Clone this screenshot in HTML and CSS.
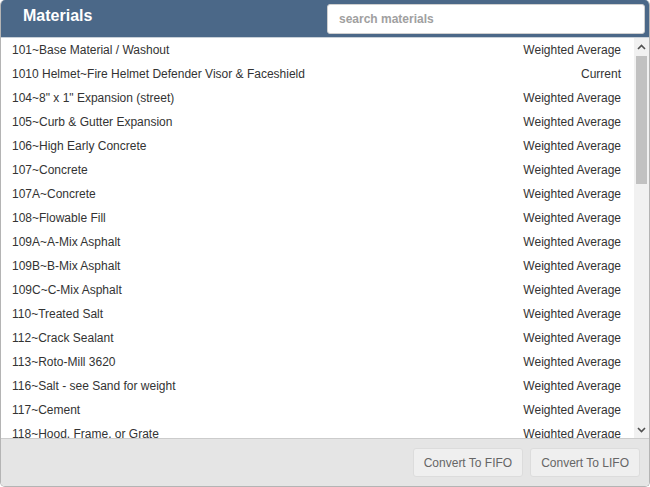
FILE: index.html
```html
<!DOCTYPE html>
<html>
<head>
<meta charset="utf-8">
<link rel="stylesheet" href="styles.css">
</head>
<body>
<div class="dialog">
  <div class="header">
    <div class="title">Materials</div>
    <input class="search" type="text" placeholder="search materials">
  </div>
  <div class="body">
    <div class="list">
      <div class="row"><span>101~Base Material / Washout</span><span>Weighted Average</span></div>
      <div class="row"><span>1010 Helmet~Fire Helmet Defender Visor &amp; Faceshield</span><span>Current</span></div>
      <div class="row"><span>104~8" x 1" Expansion (street)</span><span>Weighted Average</span></div>
      <div class="row"><span>105~Curb &amp; Gutter Expansion</span><span>Weighted Average</span></div>
      <div class="row"><span>106~High Early Concrete</span><span>Weighted Average</span></div>
      <div class="row"><span>107~Concrete</span><span>Weighted Average</span></div>
      <div class="row"><span>107A~Concrete</span><span>Weighted Average</span></div>
      <div class="row"><span>108~Flowable Fill</span><span>Weighted Average</span></div>
      <div class="row"><span>109A~A-Mix Asphalt</span><span>Weighted Average</span></div>
      <div class="row"><span>109B~B-Mix Asphalt</span><span>Weighted Average</span></div>
      <div class="row"><span>109C~C-Mix Asphalt</span><span>Weighted Average</span></div>
      <div class="row"><span>110~Treated Salt</span><span>Weighted Average</span></div>
      <div class="row"><span>112~Crack Sealant</span><span>Weighted Average</span></div>
      <div class="row"><span>113~Roto-Mill 3620</span><span>Weighted Average</span></div>
      <div class="row"><span>116~Salt - see Sand for weight</span><span>Weighted Average</span></div>
      <div class="row"><span>117~Cement</span><span>Weighted Average</span></div>
      <div class="row"><span>118~Hood, Frame, or Grate</span><span>Weighted Average</span></div>
    </div>
    <div class="scrollbar">
      <div class="arrow">
        <svg width="9" height="6" viewBox="0 0 9 6"><path d="M1 5 L4.5 1.5 L8 5" fill="none" stroke="#505050" stroke-width="1.6"/></svg>
      </div>
      <div class="track"><div class="thumb"></div></div>
      <div class="arrow">
        <svg width="9" height="6" viewBox="0 0 9 6"><path d="M1 1 L4.5 4.5 L8 1" fill="none" stroke="#505050" stroke-width="1.6"/></svg>
      </div>
    </div>
  </div>
  <div class="footer">
    <button class="btn">Convert To FIFO</button>
    <button class="btn">Convert To LIFO</button>
  </div>
</div>
</body>
</html>
```
FILE: styles.css
```css
html, body {
  margin: 0;
  padding: 0;
  background: #ffffff;
}
body {
  font-family: "Liberation Sans", Arial, sans-serif;
  width: 650px;
  height: 487px;
  overflow: hidden;
}
.dialog {
  width: 648px;
  height: 486px;
  border: 1px solid #b4b4b4;
  border-top: none;
  border-radius: 5px;
  overflow: hidden;
  display: flex;
  flex-direction: column;
  background: #fff;
}
.header {
  height: 37px;
  flex: none;
  background: #4b6888;
  border-bottom: 1px solid #c8d0d8;
  display: flex;
  align-items: flex-start;
  justify-content: space-between;
  padding: 0 4px 0 22px;
}
.title {
  color: #ffffff;
  font-weight: bold;
  font-size: 16px;
  margin-top: 7px;
}
.search {
  width: 318px;
  height: 30px;
  box-sizing: border-box;
  border: 1px solid #cfcfcf;
  border-radius: 3px;
  padding: 0 11px;
  font-family: "Liberation Sans", Arial, sans-serif;
  font-size: 12px;
  font-weight: bold;
  margin-top: 4px;
  outline: none;
}
.search::placeholder {
  color: #a0a0a0;
}
.body {
  flex: none;
  height: 400px;
  display: flex;
  overflow: hidden;
}
.list {
  flex: 1;
  overflow: hidden;
}
.row {
  height: 24px;
  display: flex;
  align-items: center;
  justify-content: space-between;
  padding: 0 13px 0 11px;
  font-size: 12px;
  color: #333333;
}
.scrollbar {
  width: 15px;
  flex: none;
  display: flex;
  flex-direction: column;
  background: #f1f1f1;
}
.arrow {
  height: 17px;
  display: flex;
  align-items: center;
  justify-content: center;
}
.track {
  flex: 1;
  padding: 1px 2px;
}
.thumb {
  height: 128px;
  background: #c1c1c1;
}
.footer {
  flex: 1;
  background: #e5e5e5;
  border-top: 1px solid #cccccc;
  display: flex;
  justify-content: flex-end;
  align-items: center;
  gap: 7px;
  padding: 0 9px 0 0;
}
.btn {
  height: 29px;
  padding: 0 10px;
  background: #efefef;
  border: 1px solid #dcdcdc;
  border-radius: 3px;
  color: #666666;
  font-family: "Liberation Sans", Arial, sans-serif;
  font-size: 12px;
}
```
